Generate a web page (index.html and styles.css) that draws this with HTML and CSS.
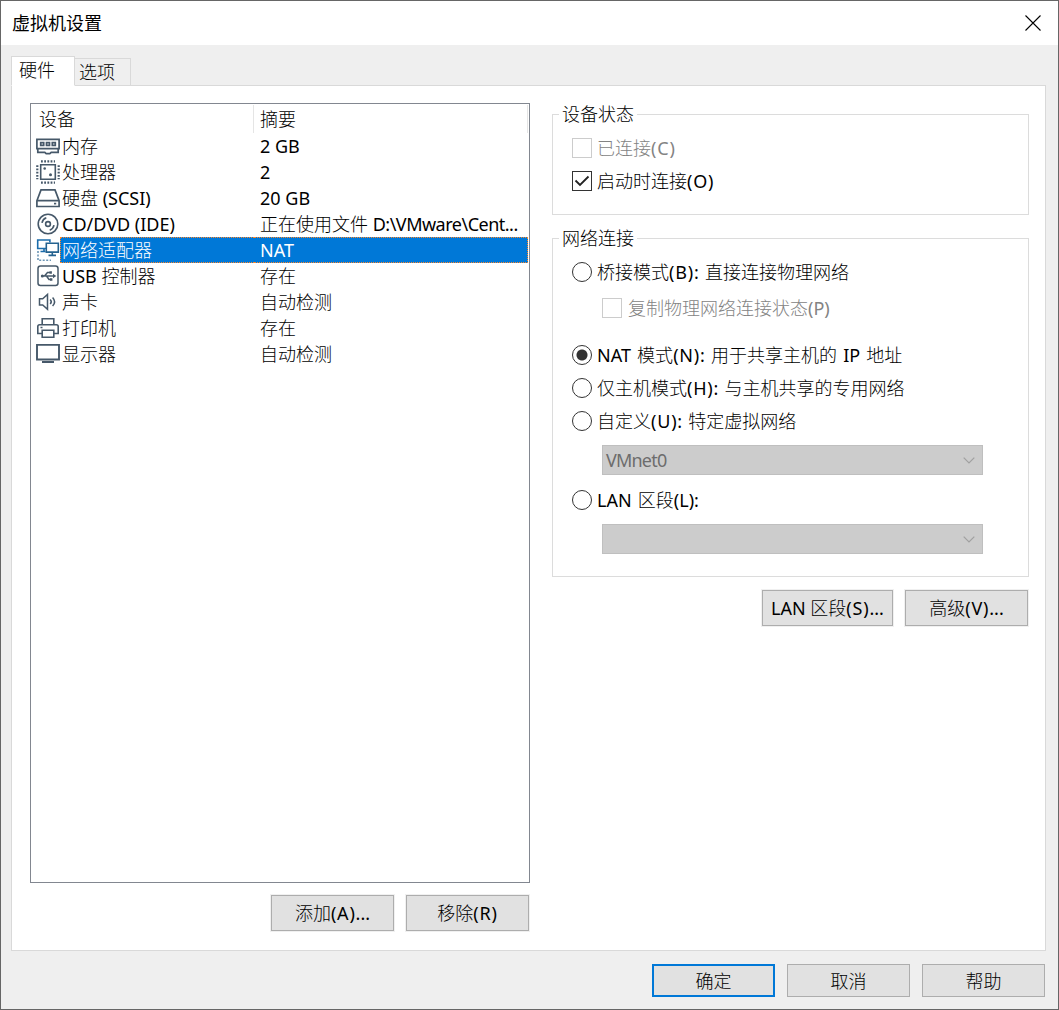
FILE: index.html
```html
<!DOCTYPE html>
<html lang="zh-CN">
<head>
<meta charset="utf-8">
<title>虚拟机设置</title>
<link rel="stylesheet" href="styles.css">
</head>
<body>
<main class="dialog">
  <header class="titlebar">
    <h1 class="title">虚拟机设置</h1>
    <svg class="close" width="16" height="16" viewBox="0 0 16 16"><path d="M.5 .5l15 15M15.5 .5l-15 15" fill="none" stroke="#000" stroke-width="1.1"/></svg>
  </header>
  <nav class="tabs">
    <div class="tab tab-active">硬件</div>
    <div class="tab">选项</div>
  </nav>
  <section class="pane">
    <div class="left">
      <div class="list">
        <div class="list-head"><div class="head-cell">设备</div><div class="head-cell">摘要</div></div>
        <div class="row">
          <svg class="icon" viewBox="0 0 24 26" fill="none" stroke="#465869" stroke-width="1.7"><path d="M.9 6.300h22.200v9.400H.9zM1.800 15.700v3.600h7l1.400 1.300h3.600l1.400-1.300h7v-3.600"/><path d="M4.700 9.700h3v2.600h-3zM10.500 9.700h3v2.600h-3zM16.300 9.700h3v2.600h-3z"/></svg>
          <div class="name">内存</div><div class="value">2 GB</div>
        </div>
        <div class="row">
          <svg class="icon" viewBox="0 0 24 26" fill="none" stroke="#465869" stroke-width="1.6"><path d="M4.700 5.700h14.600v14.600H4.700z"/><path stroke-width="2.200" stroke-dasharray="1.800 1.400" d="M5 2.300h14M5 23.700h14M1.300 6.300v14M22.700 6.300v14"/><g fill="#465869" stroke="none"><circle cx="8.700" cy="9.500" r="1.300"/><circle cx="14.500" cy="15.700" r="1.500"/></g></svg>
          <div class="name">处理器</div><div class="value">2</div>
        </div>
        <div class="row">
          <svg class="icon" viewBox="0 0 24 26" fill="none" stroke="#465869" stroke-width="1.700"><path d="M.9 15.700L5 4.900h14l4.100 10.800v5.800H.9zM.9 15.700h22.200"/><path d="M18 18.600h2.200"/></svg>
          <div class="name">硬盘 (SCSI)</div><div class="value">20 GB</div>
        </div>
        <div class="row">
          <svg class="icon" viewBox="0 0 24 26" fill="none" stroke="#465869" stroke-width="1.600"><circle cx="12" cy="13" r="9.800"/><circle cx="12" cy="13" r="2.400"/><path d="M6 11.800c.5-2.500 2-4.200 4.300-5M18 14.200c-.5 2.500-2 4.200-4.300 5"/></svg>
          <div class="name">CD/DVD (IDE)</div><div class="value">正在使用文件 <span class="path">D:\VMware\Cent...</span></div>
        </div>
        <div class="row row-selected">
          <svg class="icon" viewBox="0 0 24 26" fill="none" stroke="#1b6cab" stroke-width="1.600"><path d="M10 11.500H1.700V3h12.200v2.500M8 11.500v2.700M4.500 14.500h5"/><path stroke="#24628f" d="M10.300 6.300h12v8.800h-12zM16.300 15.100v3M12.500 18.400h7.500"/><path stroke="#6c95b5" stroke-dasharray="2 1.500" d="M2 14v9.300h13"/></svg>
          <div class="name">网络适配器</div><div class="value">NAT</div>
        </div>
        <div class="row">
          <svg class="icon" viewBox="0 0 24 26" fill="none" stroke="#465869" stroke-width="1.500"><rect x="2" y="3" width="20" height="19.500" rx="2.500"/><path d="M6 13h12M8.500 13l3-3.500h2.500M10.500 13l2.500 3.500h2"/><g fill="#465869" stroke="none"><circle cx="6.300" cy="13" r="1.500"/><path d="M17 10.700l3.300 2.300-3.300 2.300zM13.500 8.300h2.400v2.400h-2.400zM14 15.300h2.400v2.400H14z"/></g></svg>
          <div class="name">USB 控制器</div><div class="value">存在</div>
        </div>
        <div class="row">
          <svg class="icon" viewBox="0 0 24 26" fill="none" stroke="#465869" stroke-width="1.500"><path d="M3.500 9.800h3.200l4.800-4.300v14.800l-4.800-4.300H3.500z"/><path d="M14.200 10.500c1.300 1.400 1.300 3.200 0 4.600M16.600 8.500c2.400 2.600 2.400 6 0 8.600"/></svg>
          <div class="name">声卡</div><div class="value">自动检测</div>
        </div>
        <div class="row">
          <svg class="icon" viewBox="0 0 24 26" fill="none" stroke="#465869" stroke-width="1.600"><path d="M6.200 9.700V3.700h11.600v6M6 18.500H1.800v-7q0-1.800 1.800-1.800h16.800q1.800 0 1.800 1.800v7H18"/><path d="M6.200 15.200h11.600v7.100H6.200zM4.500 12.500h2"/></svg>
          <div class="name">打印机</div><div class="value">存在</div>
        </div>
        <div class="row">
          <svg class="icon" viewBox="0 0 24 26" fill="none" stroke="#465869" stroke-width="1.900"><path d="M1 3.900h22v14.600H1z"/><path stroke-width="2" d="M6 21h12"/></svg>
          <div class="name">显示器</div><div class="value">自动检测</div>
        </div>
      </div>
      <div class="buttons">
        <button class="btn">添加<span class="key">(A)</span>...</button>
        <button class="btn">移除<span class="key">(R)</span></button>
      </div>
    </div>
    <div class="right">
      <fieldset class="group group-state">
        <legend class="legend">设备状态</legend>
        <label class="option disabled"><span class="check"></span><span>已连接<span class="key">(C)</span></span></label>
        <label class="option"><span class="check"><svg width="18" height="18" viewBox="0 0 18 18"><path d="M2.500 8.500l4.500 4.500 8.500-8.500" fill="none" stroke="#222" stroke-width="1.800"/></svg></span><span>启动时连接<span class="key">(O)</span></span></label>
      </fieldset>
      <fieldset class="group group-net">
        <legend class="legend">网络连接</legend>
        <label class="option"><span class="radio"></span><span>桥接模式<span class="key">(B)</span>: 直接连接物理网络</span></label>
        <label class="option option-sub disabled"><span class="check"></span><span>复制物理网络连接状态(P)</span></label>
        <label class="option"><span class="radio radio-on"></span><span>NAT 模式<span class="key">(N)</span>: 用于共享主机的 IP 地址</span></label>
        <label class="option"><span class="radio"></span><span>仅主机模式<span class="key">(H)</span>: 与主机共享的专用网络</span></label>
        <label class="option"><span class="radio"></span><span>自定义<span class="key">(U)</span>: 特定虚拟网络</span></label>
        <div class="select"><span class="net-name">VMnet0</span><svg width="12" height="7" viewBox="0 0 12 7"><path d="M.7 .7L6 6 11.300 .7" fill="none" stroke="#a0a0a0" stroke-width="1.200"/></svg></div>
        <label class="option"><span class="radio"></span><span>LAN 区段(L):</span></label>
        <div class="select"><svg width="12" height="7" viewBox="0 0 12 7"><path d="M.7 .7L6 6 11.300 .7" fill="none" stroke="#a0a0a0" stroke-width="1.200"/></svg></div>
      </fieldset>
      <div class="buttons">
        <button class="btn btn-wide">LAN 区段<span class="key">(S)</span>...</button>
        <button class="btn">高级<span class="key">(V)</span>...</button>
      </div>
    </div>
  </section>
  <footer class="footer">
    <button class="btn btn-default">确定</button>
    <button class="btn">取消</button>
    <button class="btn">帮助</button>
  </footer>
</main>
</body>
</html>
```
FILE: styles.css
```css
* { box-sizing: border-box; }
body {
  margin: 0;
  font: 18px/26px "Noto Sans", "Noto Sans CJK SC Light", "Noto Sans CJK SC", sans-serif;
  color: #000;
  background: #efefef;
}
.dialog {
  width: 1059px;
  height: 1010px;
  border: 1px solid #666;
  background: #efefef;
  display: flex;
  flex-direction: column;
  overflow: hidden;
}
.titlebar {
  height: 44px;
  flex: none;
  background: #fff;
  display: flex;
  align-items: center;
  justify-content: space-between;
  padding: 0 17px 0 11px;
}
.title { margin: 0; font: 400 18px/24px "Noto Sans CJK SC", sans-serif; padding-bottom: 2px; }
.tabs {
  height: 41px;
  flex: none;
  display: flex;
  align-items: flex-end;
  padding-left: 10px;
  position: relative;
  z-index: 1;
  margin-bottom: -1px;
}
.tab {
  height: 28px;
  width: 56px;
  padding-left: 4px;
  border: 1px solid #d9d9d9;
  border-left: 0;
}
.tab-active {
  width: 64px;
  height: 30px;
  padding-left: 7px;
  border-left: 1px solid #d9d9d9;
  border-bottom-color: #fff;
  background: #fff;
}
.pane {
  width: 1035px;
  height: 866px;
  flex: none;
  margin-left: 10px;
  border: 1px solid #d9d9d9;
  background: #fff;
  display: flex;
  gap: 22px;
  padding: 17px 16px 0 18px;
}
.left { width: 500px; }
.list {
  height: 780px;
  border: 1px solid #828790;
  padding-right: 1px;
}
.list-head {
  display: grid;
  grid-template-columns: 223px 274px;
  height: 29px;
  padding-top: 1px;
}
.head-cell { border-right: 1px solid #e5e5e5; padding: 1px 0 0 8px; }
.head-cell + .head-cell { padding-left: 6px; }
.row {
  height: 26px;
  display: grid;
  grid-template-columns: 24px 194px 1fr;
  padding-left: 5px;
  white-space: nowrap;
}
.icon { width: 24px; height: 26px; }
.name { padding-left: 2px; }
.value { padding-left: 6px; }
.path { letter-spacing: -.5px; }
.row-selected .name, .row-selected .value {
  color: #fff;
  background: #0078d7;
  border: 1px dotted #ff8728;
  line-height: 24px;
}
.row-selected .name { border-right: 0; padding-left: 1px; }
.row-selected .value { border-left: 0; }
.buttons {
  display: flex;
  justify-content: flex-end;
  gap: 12px;
  padding: 12px 1px 0 0;
}
.btn {
  width: 123px;
  height: 36px;
  padding: 0;
  border: 1px solid #adadad;
  background: #e1e1e1;
  color: #000;
  font: inherit;
}
.buttons .btn { box-shadow: 0 0 0 1px #f0f0f0; }
.buttons .btn-wide { width: 131px; }
.key { letter-spacing: .8px; }
.right { width: 477px; margin-top: -2px; }
.group {
  margin: 0;
  padding: 4px 0 0 19px;
  border: 1px solid #dcdcdc;
  min-width: 0;
}
.legend {
  height: 26px;
  margin-left: -13px;
  padding: 0 3px;
}
.group-state { height: 114px; margin-bottom: 10px; }
.group-net { height: 352px; }
.group + .buttons { padding-top: 13px; }
.option {
  display: flex;
  align-items: center;
  gap: 5px;
  height: 33px;
  white-space: nowrap;
  word-spacing: 1.5px;
}
.check, .radio {
  flex: none;
  width: 20px;
  height: 20px;
  border: 1px solid #333;
  background: #fff;
}
.check svg { display: block; }
.radio { border-radius: 50%; }
.radio-on { background: radial-gradient(circle, #333 5px, #fff 6px); }
.disabled { color: #838383; }
.disabled .check { border-color: #ccc; }
.option-sub { margin: 3px 0 14px 30px; gap: 6px; }
.select {
  width: 381px;
  height: 30px;
  margin: 8px 0 8px 30px;
  padding: 0 7px 0 3px;
  border: 1px solid #bfbfbf;
  background: #ccc;
  color: #6d6d6d;
  display: flex;
  align-items: center;
}
.select svg { margin-left: auto; }
.net-name { letter-spacing: -.8px; }
.footer {
  display: flex;
  justify-content: flex-end;
  gap: 12px;
  padding: 13px 13px 0 0;
}
.footer .btn { height: 33px; }
.footer .btn-default { border: 2px solid #0078d7; }
```
